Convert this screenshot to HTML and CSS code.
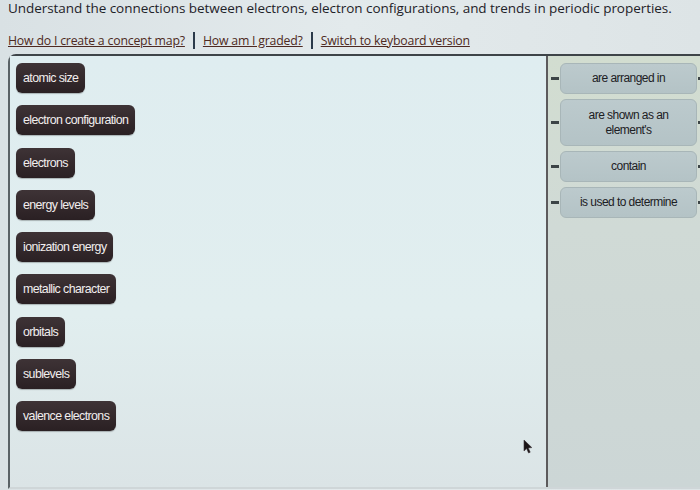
FILE: index.html
```html
<!DOCTYPE html>
<html>
<head>
<meta charset="utf-8">
<link rel="stylesheet" href="styles.css">
</head>
<body>
<div class="page">
  <h1 class="title">Understand the connections between electrons, electron configurations, and trends in periodic properties.</h1>
  <div class="links">
    <a class="link" href="#">How do I create a concept map?</a>
    <span class="sep"></span>
    <a class="link" href="#">How am I graded?</a>
    <span class="sep"></span>
    <a class="link" href="#">Switch to keyboard version</a>
  </div>
  <div class="board">
    <div class="terms">
      <div class="term">atomic size</div>
      <div class="term">electron configuration</div>
      <div class="term">electrons</div>
      <div class="term">energy levels</div>
      <div class="term">ionization energy</div>
      <div class="term">metallic character</div>
      <div class="term">orbitals</div>
      <div class="term">sublevels</div>
      <div class="term">valence electrons</div>
      <svg class="cursor" width="10" height="15" viewBox="0 0 10 15"><path d="M1 1 L1 12 L3.6 9.6 L5.6 14 L7.2 13.2 L5.3 8.9 L8.8 8.6 Z" fill="#1a1416" stroke="#3a3236" stroke-width="0.6"/></svg>
    </div>
    <div class="linkwords">
      <div class="lw-row"><span class="dash"></span><div class="lw">are arranged in</div><span class="dash"></span></div>
      <div class="lw-row"><span class="dash"></span><div class="lw tall">are shown as an<br>element's</div><span class="dash"></span></div>
      <div class="lw-row"><span class="dash"></span><div class="lw">contain</div><span class="dash"></span></div>
      <div class="lw-row"><span class="dash"></span><div class="lw">is used to determine</div><span class="dash"></span></div>
    </div>
  </div>
</div>
</body>
</html>
```
FILE: styles.css
```css
html, body {
  margin: 0;
  padding: 0;
}
body {
  width: 700px;
  height: 490px;
  overflow: hidden;
  background: linear-gradient(90deg, #d9e1e4 0%, #e3eaec 50%, #dde4e6 100%);
  font-family: "Open Sans", "Liberation Sans", sans-serif;
}
.page {
  padding: 0 0 0 8px;
}
.title {
  margin: 0;
  font-size: 13.5px;
  font-weight: normal;
  line-height: 16px;
  color: #1e2228;
  letter-spacing: -0.05px;
}
.links {
  display: flex;
  align-items: center;
  margin-top: 15px;
  height: 18px;
  font-size: 12.3px;
}
.link {
  color: #4e2a22;
  text-decoration: underline;
  letter-spacing: -0.2px;
}
.sep {
  width: 2px;
  height: 17px;
  background: #2b3a4a;
  margin: 0 8px;
}
.board {
  display: flex;
  margin-top: 5px;
  height: 431px;
  border-top: 2px solid #3e4448;
  border-left: 2px solid #5a6266;
  border-top-left-radius: 8px;
  border-bottom: 2px solid #cfd6d8;
}
.terms {
  position: relative;
  flex-shrink: 0;
  width: 538px;
  background: linear-gradient(180deg, #dfedf0 0%, #e1eeef 60%, #dbe4e6 100%);
  padding: 7px 0 0 6px;
  display: flex;
  flex-direction: column;
  align-items: flex-start;
  gap: 12.3px;
  border-right: 2px solid #5c5a5c;
  box-sizing: border-box;
}
.term {
  height: 30px;
  box-sizing: border-box;
  padding: 0 7px;
  display: flex;
  align-items: center;
  border-radius: 6px;
  background: linear-gradient(180deg, #3e3336 0%, #2a2023 100%);
  color: #f2eeee;
  font-family: "Liberation Sans", Arial, sans-serif;
  font-size: 12.4px;
  letter-spacing: -0.6px;
  white-space: nowrap;
  box-shadow: 0 1px 1px rgba(0,0,0,0.25);
}
.cursor {
  position: absolute;
  left: 513px;
  top: 383px;
}
.linkwords {
  flex: 1;
  min-width: 160px;
  background: linear-gradient(180deg, #d2ddd0 0%, #d0dad6 40%, #ccd6d6 100%);
  padding-top: 7px;
  display: flex;
  flex-direction: column;
  gap: 5px;
}
.lw-row {
  display: flex;
  align-items: center;
}
.dash {
  flex-shrink: 0;
  width: 8px;
  height: 3px;
  background: #3c4446;
  margin-left: 3px;
}
.lw-row .dash:last-child {
  margin-left: 1px;
  width: 4px;
}
.lw {
  flex-shrink: 0;
  width: 137px;
  height: 31px;
  box-sizing: border-box;
  margin-left: 1px;
  display: flex;
  align-items: center;
  justify-content: center;
  text-align: center;
  border-radius: 6px;
  background: linear-gradient(180deg, #bccacd 0%, #b4c3c6 100%);
  border: 1px solid #a8b6b8;
  color: #1c2024;
  font-family: "Liberation Sans", Arial, sans-serif;
  font-size: 12px;
  letter-spacing: -0.55px;
  line-height: 15px;
}
.lw.tall {
  height: 47px;
  align-items: flex-start;
  padding-top: 8px;
}
```
